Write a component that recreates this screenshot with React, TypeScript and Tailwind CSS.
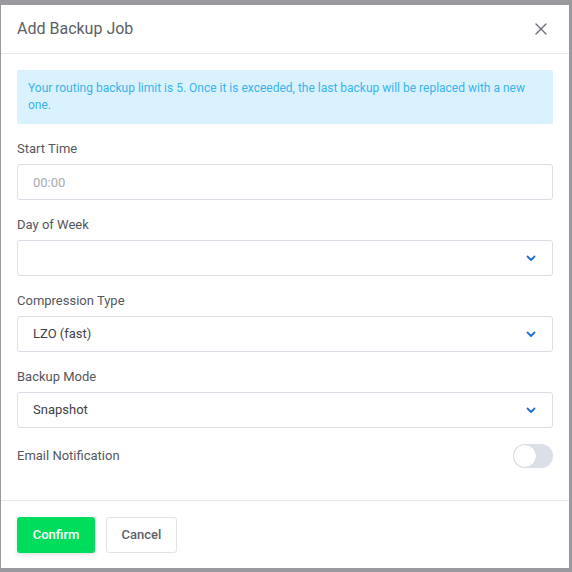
import React, { useState } from 'react';

const Chevron = () => (
  <svg width="10" height="7" viewBox="0 0 10 7" fill="none" className="shrink-0">
    <path d="M1.5 1.5L5 5L8.5 1.5" stroke="#1f6fd6" strokeWidth="1.8" strokeLinecap="round" strokeLinejoin="round" />
  </svg>
);

const Field = ({ label, children }: { label: string; children: React.ReactNode }) => (
  <div className="flex flex-col mt-[16px]">
    <label className="text-[13px] leading-[18px] text-[#54575d] mb-[6px]">{label}</label>
    {children}
  </div>
);

const Select = ({ value }: { value: string }) => (
  <div className="h-[36px] w-full border border-[#dcdde6] rounded-[3px] flex items-center justify-between pl-[15px] pr-[16px]">
    <span className="text-[13px] text-[#3f4247]">{value}</span>
    <Chevron />
  </div>
);

export default function App() {
  const [email, setEmail] = useState(false);

  return (
    <div className="w-[572px] h-[572px] bg-[#9a9a9e] pl-[1px] pt-[5px]" style={{ fontFamily: 'Roboto, "Liberation Sans", sans-serif' }}>
      <div className="w-[568px] h-[563px] bg-white flex flex-col">
        {/* Header */}
        <div className="h-[49px] shrink-0 border-b border-[#e6e7ec] flex items-center justify-between pl-4 pr-[22px]">
          <h2 className="text-[16px] text-[#5c5f66]">Add Backup Job</h2>
          <button className="text-[#6b6e75]">
            <svg width="12" height="12" viewBox="0 0 12 12" fill="none">
              <path d="M1 1L11 11M11 1L1 11" stroke="currentColor" strokeWidth="1.4" strokeLinecap="round" />
            </svg>
          </button>
        </div>

        {/* Body */}
        <div className="flex-1 px-4 pt-4">
          <div className="bg-[#daf2fd] rounded-[2px] px-[11px] py-[10px] text-[12px] leading-[17px] text-[#3ab3f1]">
            Your routing backup limit is 5. Once it is exceeded, the last backup will be replaced with a new one.
          </div>

          <Field label="Start Time">
            <input
              placeholder="00:00"
              className="h-[36px] w-full border border-[#dcdde6] rounded-[3px] px-[15px] text-[13px] text-[#3f4247] placeholder:text-[#a9abb0] outline-none"
            />
          </Field>

          <Field label="Day of Week">
            <Select value="" />
          </Field>

          <Field label="Compression Type">
            <Select value="LZO (fast)" />
          </Field>

          <Field label="Backup Mode">
            <Select value="Snapshot" />
          </Field>

          <div className="mt-[16px] h-[24px] flex items-center justify-between">
            <span className="text-[13px] text-[#54575d]">Email Notification</span>
            <button
              onClick={() => setEmail(!email)}
              className={`w-[40px] h-[24px] rounded-full flex items-center p-[1px] ${email ? 'bg-[#00dc5c] justify-end' : 'bg-[#dcdfe8] justify-start'}`}
            >
              <span className="w-[22px] h-[22px] rounded-full bg-white shadow-[0_0_1px_rgba(0,0,0,0.2)]" />
            </button>
          </div>
        </div>

        {/* Footer */}
        <div className="shrink-0 border-t border-[#e6e7ec] px-4 pt-4 pb-[15px] flex gap-[11px]">
          <button className="h-[36px] w-[78px] rounded-[3px] bg-[#00dc5c] text-white text-[13px] font-medium shadow-[0_2px_4px_rgba(0,0,0,0.12)]">
            Confirm
          </button>
          <button className="h-[36px] w-[71px] rounded-[3px] border border-[#e2e3e8] bg-white text-[#5c5f66] text-[13px] font-medium">
            Cancel
          </button>
        </div>
      </div>
    </div>
  );
}
